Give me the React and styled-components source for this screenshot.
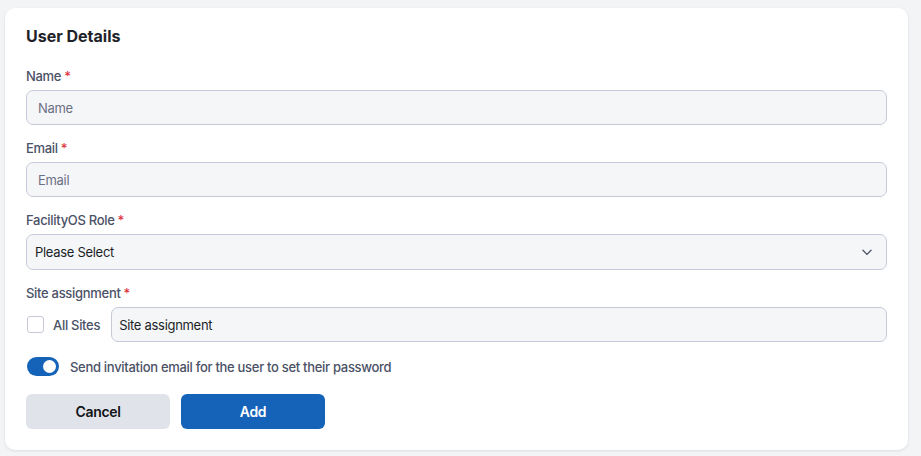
import React from "react";
import styled, { createGlobalStyle } from "styled-components";

const Global = createGlobalStyle`
  html, body { margin: 0; padding: 0; background: #f3f4f6; }
  body { font-family: Inter, "Noto Sans", sans-serif; -webkit-font-smoothing: antialiased; letter-spacing: -0.3px; }
  * { box-sizing: border-box; }
`;

const Page = styled.div`
  padding: 8px 13px 6px 5px;
`;

const Card = styled.div`
  background: #fff;
  border-radius: 10px;
  box-shadow: 0 1px 3px rgba(16, 24, 40, 0.1);
  padding: 18px 21px 21px 21px;
  display: flex;
  flex-direction: column;
`;

const Title = styled.h2`
  margin: 0 0 22px;
  font-size: 16px;
  line-height: 20px;
  font-weight: 700;
  letter-spacing: 0;
  color: #1f2329;
`;

const Field = styled.div`
  display: flex;
  flex-direction: column;
  gap: 6px;
  margin-bottom: 15px;
`;

const Label = styled.label`
  font-size: 13px;
  line-height: 16px;
  color: #4b5166;
  font-weight: 500;
`;

const Req = styled.span`
  color: #e0343f;
  margin-left: 3px;
`;

const Input = styled.input`
  width: 100%;
  height: 35px;
  border: 1px solid #c6cad8;
  border-radius: 7px;
  background: #f5f6f8;
  padding: 0 ${(p) => p.$px || 11}px;
  font-family: inherit;
  font-size: 13px;
  letter-spacing: -0.3px;
  color: #1b1f27;
  outline: none;
  &::placeholder { color: #6b7085; }
`;

const SelectBox = styled.div`
  height: 36px;
  border: 1px solid #c6cad8;
  border-radius: 7px;
  background: #f5f6f8;
  padding: 0 12px 0 8px;
  display: flex;
  align-items: center;
  justify-content: space-between;
  font-size: 13px;
  color: #1b1f27;
`;

const Row = styled.div`
  display: flex;
  align-items: center;
  gap: 9px;
`;

const Checkbox = styled.span`
  width: 17px;
  height: 17px;
  margin-left: 1px;
  border: 1px solid #c6cad8;
  border-radius: 3px;
  background: #fff;
  flex: none;
`;

const CheckLabel = styled.span`
  font-size: 13px;
  color: #4b5166;
  font-weight: 500;
  margin-right: 2px;
  white-space: nowrap;
`;

const ToggleRow = styled.div`
  display: flex;
  align-items: center;
  gap: 11px;
  margin: 0 0 18px;
`;

const Toggle = styled.span`
  width: 32px;
  height: 19px;
  margin-left: 1px;
  border-radius: 10px;
  background: #1463b8;
  position: relative;
  flex: none;
  &::after {
    content: "";
    position: absolute;
    right: 3px;
    top: 3px;
    width: 13px;
    height: 13px;
    border-radius: 50%;
    background: #fff;
  }
`;

const ToggleText = styled.span`
  font-size: 13px;
  color: #4b5166;
  font-weight: 500;
`;

const Buttons = styled.div`
  display: flex;
  gap: 11px;
`;

const Button = styled.button`
  width: 144px;
  height: 35px;
  border: none;
  border-radius: 6px;
  font-family: inherit;
  font-size: 14px;
  font-weight: 600;
  letter-spacing: -0.3px;
  background: ${(p) => (p.$primary ? "#1463b8" : "#e1e3ea")};
  color: ${(p) => (p.$primary ? "#fff" : "#111418")};
  cursor: pointer;
`;

export default function App() {
  return (
    <>
      <Global />
      <Page>
        <Card>
          <Title>User Details</Title>
          <Field>
            <Label>Name<Req>*</Req></Label>
            <Input placeholder="Name" />
          </Field>
          <Field>
            <Label>Email<Req>*</Req></Label>
            <Input placeholder="Email" />
          </Field>
          <Field>
            <Label>FacilityOS Role<Req>*</Req></Label>
            <SelectBox>
              <span>Please Select</span>
              <svg width="14" height="14" viewBox="0 0 24 24" fill="none" stroke="#4b5166" strokeWidth="2.2" strokeLinecap="round" strokeLinejoin="round">
                <path d="M5 9l7 7 7-7" />
              </svg>
            </SelectBox>
          </Field>
          <Field>
            <Label>Site assignment<Req>*</Req></Label>
            <Row>
              <Checkbox />
              <CheckLabel>All Sites</CheckLabel>
              <Input placeholder="Site assignment" defaultValue="Site assignment" $px={7} />
            </Row>
          </Field>
          <ToggleRow>
            <Toggle />
            <ToggleText>Send invitation email for the user to set their password</ToggleText>
          </ToggleRow>
          <Buttons>
            <Button>Cancel</Button>
            <Button $primary>Add</Button>
          </Buttons>
        </Card>
      </Page>
    </>
  );
}
